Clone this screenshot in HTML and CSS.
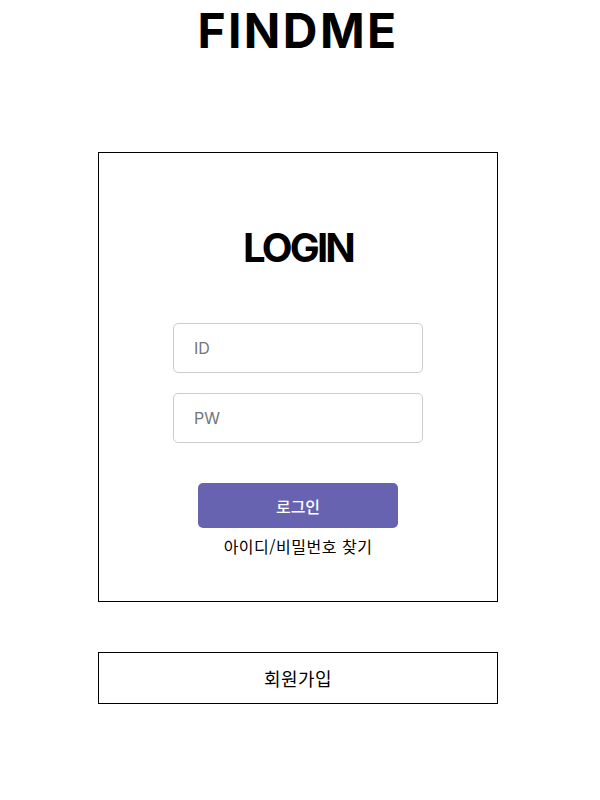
FILE: index.html
```html
<!DOCTYPE html>
<html lang="ko">
<head>
<meta charset="utf-8">
<link rel="stylesheet" href="styles.css">
</head>
<body>
<header class="brand">
  <h1 class="brand-title">FINDME</h1>
</header>
<main class="page">
  <section class="login-box">
    <h2 class="login-title">LOGIN</h2>
    <form class="login-form">
      <input class="field" type="text" placeholder="ID">
      <input class="field" type="password" placeholder="PW">
      <button class="login-btn" type="button">로그인</button>
    </form>
    <a class="find-link" href="#">아이디/비밀번호 찾기</a>
  </section>
  <a class="signup-box" href="#">회원가입</a>
</main>
</body>
</html>
```

FILE: styles.css
```css
* { box-sizing: border-box; }
html, body { margin: 0; padding: 0; background: #fff; }
body {
  font-family: "Noto Sans CJK KR", "Noto Sans", sans-serif;
  color: #000;
  padding-right: 4px;
}
.brand {
  display: flex;
  justify-content: center;
  padding-top: 2px;
}
.brand-title {
  margin: 0;
  font-family: Inter, "Noto Sans", sans-serif;
  font-weight: 700;
  font-size: 48px;
  letter-spacing: 2.4px;
  line-height: 58px;
}
.page {
  display: flex;
  flex-direction: column;
  align-items: center;
  padding-top: 92px;
}
.login-box {
  width: 400px;
  height: 450px;
  border: 1px solid #000;
  display: flex;
  flex-direction: column;
  align-items: center;
  padding-top: 70px;
}
.login-title {
  margin: 0;
  font-family: Inter, "Noto Sans", sans-serif;
  font-weight: 700;
  font-size: 40px;
  letter-spacing: -2.8px;
  line-height: 50px;
}
.login-form {
  display: flex;
  flex-direction: column;
  align-items: center;
  margin-top: 50px;
}
.field {
  width: 250px;
  height: 50px;
  border: 1px solid #ccc;
  border-radius: 5px;
  padding: 0 20px;
  font-family: Inter, "Noto Sans", sans-serif;
  font-size: 16px;
  margin-bottom: 20px;
  outline: none;
}
.field::placeholder { color: #757575; }
.login-btn {
  margin-top: 20px;
  width: 200px;
  height: 45px;
  border: 0;
  border-radius: 5px;
  background: #6763b0;
  color: #fff;
  font-family: "Noto Sans CJK KR", sans-serif;
  font-size: 16px;
  font-weight: 500;
}
.find-link {
  margin-top: 6px;
  color: #000;
  text-decoration: none;
  font-size: 16px;
  letter-spacing: 0.5px;
  line-height: 24px;
}
.signup-box {
  margin-top: 50px;
  width: 400px;
  height: 52px;
  border: 1px solid #000;
  display: flex;
  align-items: center;
  justify-content: center;
  color: #000;
  text-decoration: none;
  font-size: 18px;
  letter-spacing: 0.5px;
}
```
